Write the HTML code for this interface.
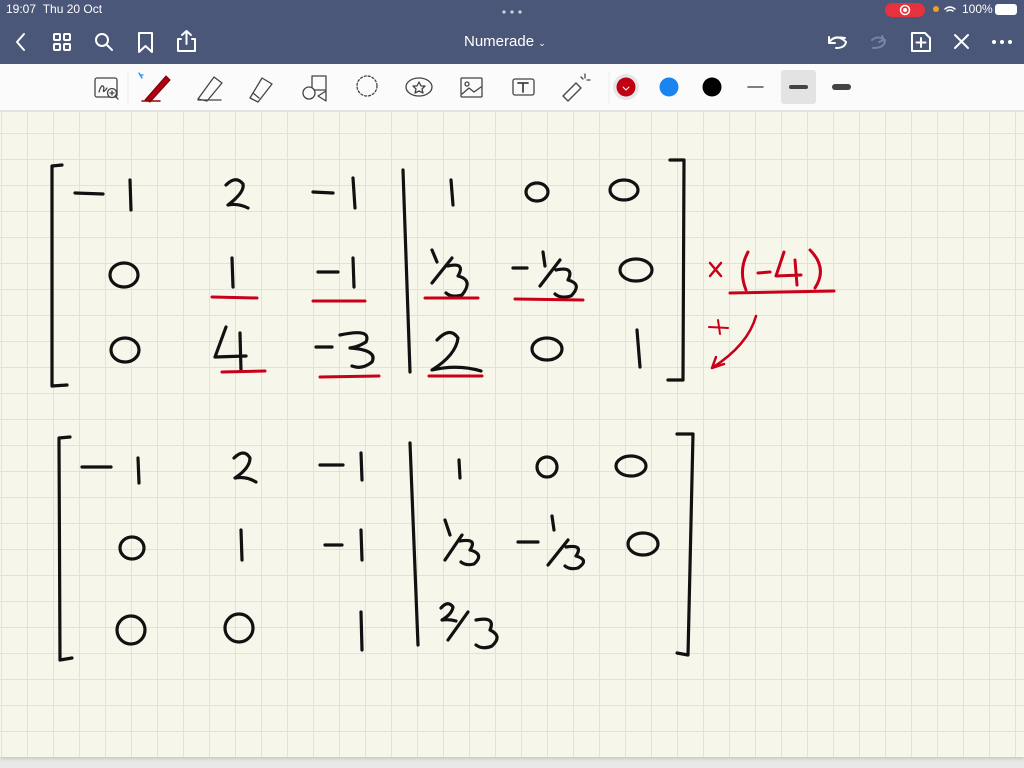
<!DOCTYPE html>
<html><head><meta charset="utf-8"><style>
html,body{margin:0;padding:0;width:1024px;height:768px;overflow:hidden;background:#e9e9e7;font-family:"Liberation Sans",sans-serif}
#nav{position:absolute;left:0;top:0;width:1024px;height:64px;background:#4b5778;color:#fff}
#tb{position:absolute;left:0;top:64px;width:1024px;height:46px;background:#fbfbfb;border-bottom:2px solid #e4e4e4}
#page{position:absolute;left:0;top:112px;width:1024px;height:645px;background-color:#f7f6eb;
background-image:linear-gradient(to right,#e4e3d3 1px,transparent 1px),linear-gradient(to bottom,#e4e3d3 1px,transparent 1px);
background-size:26px 26px;background-position:1px 21px;box-shadow:0 2px 3px #c8c8c0}
svg{position:absolute;left:0;top:0}
</style></head><body>
<div id="nav">
<div style="position:absolute;left:6px;top:2px;font-size:12px;">19:07&nbsp;&nbsp;Thu 20 Oct</div>
<div style="position:absolute;left:464px;top:33px;font-size:15px;">Numerade <span style="font-size:9px">⌄</span></div>
<div style="position:absolute;left:962px;top:2px;font-size:12px;">100%</div>
</div>
<div id="tb"></div>
<div id="page"></div>
<svg width="1024" height="768" viewBox="0 0 1024 768" fill="none" stroke-linecap="round" stroke-linejoin="round">
<!-- status -->
<g fill="#cfd4e0"><circle cx="504" cy="12" r="1.6"/><circle cx="512" cy="12" r="1.6"/><circle cx="520" cy="12" r="1.6"/></g>
<rect x="885" y="3" width="40" height="14" rx="7" fill="#e5323c"/>
<circle cx="905" cy="10" r="4.5" stroke="#fff" stroke-width="1.5"/><circle cx="905" cy="10" r="2" fill="#fff"/>
<circle cx="936" cy="9" r="3" fill="#f0a020"/>
<path d="M945 9 Q950 5 955 9 M947 11 Q950 9 953 11" stroke="#fff" stroke-width="1.5"/>
<rect x="995" y="4" width="22" height="11" rx="3" fill="#fff"/>
<!-- nav icons -->
<g stroke="#fff" stroke-width="2">
<path d="M24 34 L17 42 L24 50"/>
<rect x="54" y="34" width="6" height="6" rx="1"/><rect x="64" y="34" width="6" height="6" rx="1"/><rect x="54" y="44" width="6" height="6" rx="1"/><rect x="64" y="44" width="6" height="6" rx="1"/>
<circle cx="102" cy="40" r="6"/><path d="M107 45 L112 50"/>
<path d="M139 33 H152 V52 L145.5 46 L139 52 Z"/>
<path d="M181 39 H178 V51 H195 V39 H192 M186.5 44 V31 M182 35 L186.5 31 L191 35"/>
<path d="M845 38 Q832 36 829 43 M829 37 V43 H835 M831 40 Q838 34 846 42 Q845 48 836 48" />
<path d="M920 33 H925 L930 38 V51 H912 V33 Z M921 38 V47 M916.5 42.5 H925.5"/>
<path d="M955 35 L968 48 M968 35 L955 48"/>
</g>
<path d="M872 40 Q878 35 884 40 L882 36 M884 40 L879 42 M885 40 Q885 48 873 48" stroke="#7784a2" stroke-width="2"/>
<g fill="#fff"><circle cx="994" cy="42" r="2"/><circle cx="1002" cy="42" r="2"/><circle cx="1010" cy="42" r="2"/></g>
<!-- toolbar icons -->
<g stroke="#444" stroke-width="1.3">
<rect x="95" y="78" width="22" height="19" rx="2"/><circle cx="112" cy="93" r="4.5" fill="#fbfbfb"/><path d="M115 96 L118 99 M110 93 H114 M112 91 V95 M99 92 Q102 82 104 88 Q102 95 107 88"/>
<path d="M198 99 L214 77 L222 83 L207 101 Z M198 100 H221"/>
<path d="M250 98 L262 78 L272 84 L258 102 Z M253 93 L259 98"/>
<rect x="312" y="76" width="14" height="14"/><circle cx="309" cy="93" r="6" fill="#fbfbfb"/><path d="M326 91 V101 L318 96 Z"/>
<circle cx="367" cy="86" r="10" stroke-dasharray="2 2"/>
<ellipse cx="419" cy="87" rx="13" ry="9"/><path d="M419 82 L421 86 L425 86 L422 89 L423 93 L419 91 L415 93 L416 89 L413 86 L417 86 Z"/>
<rect x="461" y="78" width="21" height="19" rx="1"/><circle cx="467" cy="84" r="2"/><path d="M462 94 L469 88 L474 92 L481 87"/>
<rect x="513" y="79" width="21" height="16" rx="2"/><path d="M518 83 H528 M523 83 V92" stroke-width="1.8"/>
<path d="M563 96 L576 83 L581 88 L568 101 Z M585 74 V78 M590 80 H587 M581 77 L583 79"/>
</g>
<path d="M145 100 L166 76 L170 80 L150 102 Z" fill="#b00014" stroke="#700" stroke-width="1"/>
<path d="M142 101 H160" stroke="#900" stroke-width="1.5"/>
<path d="M139 73 L142 78 M140 75 L143 75" stroke="#1a8cff" stroke-width="1.3"/>
<path d="M128 72 V104 M609 72 V104" stroke="#ececec" stroke-width="1"/>
<circle cx="626" cy="87" r="13" fill="#e6e6e6"/><circle cx="626" cy="87" r="9.5" fill="#c10012"/><path d="M623 87 L626 90 L629 87" stroke="#fff" stroke-width="1"/>
<circle cx="669" cy="87" r="9.5" fill="#1a84f0"/>
<circle cx="712" cy="87" r="9.5" fill="#000"/>
<path d="M748 87 H763" stroke="#555" stroke-width="1.5"/>
<rect x="781" y="70" width="35" height="34" rx="3" fill="#e3e3e3"/>
<path d="M791 87 H806" stroke="#444" stroke-width="4"/>
<path d="M835 87 H848" stroke="#444" stroke-width="6"/>

<!-- handwriting black -->
<g stroke="#111" stroke-width="3.2">
<path d="M62 165 L52 166 L52 386 L67 385"/>
<path d="M75 193 L103 194 M130 180 L131 210"/>
<path d="M226 185 Q236 175 243 184 Q245 192 228 205 Q238 203 248 208"/>
<path d="M313 192 L333 193 M353 178 L355 208"/>
<path d="M403 170 L410 372"/>
<path d="M451 180 L453 205"/>
<ellipse cx="537" cy="192" rx="11" ry="9"/>
<ellipse cx="624" cy="190" rx="14" ry="10"/>
<path d="M670 160 L684 160 L683 380 L668 380"/>
<ellipse cx="124" cy="275" rx="14" ry="12"/>
<path d="M232 258 L233 287"/>
<path d="M318 272 L338 272 M353 258 L354 287"/>
<path d="M432 250 L437 262 M432 283 L452 258 M448 266 Q466 262 458 276 Q474 280 462 295 Q452 298 446 293"/>
<path d="M513 268 L527 268 M543 252 L545 266 M540 286 L560 260 M556 270 Q575 266 568 280 Q583 284 571 296 Q561 299 555 294"/>
<ellipse cx="636" cy="270" rx="16" ry="11"/>
<ellipse cx="125" cy="350" rx="14" ry="12"/>
<path d="M226 327 L215 357 L246 356 M240 333 L241 371"/>
<path d="M316 347 L332 347 M340 335 Q372 328 366 342 Q358 347 350 348 Q378 350 372 362 Q362 370 352 366"/>
<path d="M437 340 Q450 326 458 338 Q456 355 432 370 Q458 364 481 371"/>
<ellipse cx="547" cy="349" rx="15" ry="11"/>
<path d="M637 330 L640 367"/>

<path d="M70 437 L59 438 L60 660 L72 658"/>
<path d="M82 467 L111 467 M138 458 L139 483"/>
<path d="M234 458 Q244 448 250 458 Q250 468 235 478 Q246 476 256 482"/>
<path d="M320 465 L343 465 M361 453 L362 480"/>
<path d="M410 443 L418 645"/>
<path d="M459 460 L460 478"/>
<ellipse cx="547" cy="467" rx="10" ry="10"/>
<ellipse cx="631" cy="466" rx="15" ry="10"/>
<path d="M677 434 L693 434 L688 655 L677 653"/>
<ellipse cx="132" cy="548" rx="12" ry="11"/>
<path d="M241 530 L242 560"/>
<path d="M325 545 L342 545 M361 530 L362 560"/>
<path d="M445 520 L450 535 M445 560 L462 535 M460 541 Q478 538 470 550 Q485 554 474 564 Q466 566 461 562"/>
<path d="M518 542 L538 542 M552 516 L554 530 M548 565 L568 540 M566 547 Q584 544 576 556 Q590 560 578 568 Q570 570 565 566"/>
<ellipse cx="643" cy="544" rx="15" ry="11"/>
<ellipse cx="131" cy="630" rx="14" ry="14"/>
<ellipse cx="239" cy="628" rx="14" ry="14"/>
<path d="M361 612 L362 650"/>
<path d="M441 608 Q448 600 453 607 Q452 614 442 620 Q450 619 456 621 M448 640 L468 612 M476 620 Q496 616 490 630 Q503 636 492 646 Q483 650 476 645"/>
</g>
<!-- red -->
<g stroke="#c8001a" stroke-width="3">
<path d="M212 297 L257 298 M313 301 L365 301 M222 372 L265 371 M320 377 L379 376 M425 298 L478 298 M515 299 L583 300 M429 376 L482 376"/>
<path d="M710 263 L721 276 M721 263 L710 276" stroke-width="2.5"/>
<path d="M748 252 Q738 270 746 290 M758 273 L770 272 M784 252 L776 276 L801 275 M795 260 L797 285 M810 250 Q828 268 815 288"/>
<path d="M730 293 L834 291"/>
<path d="M709 327 L728 328 M718 320 L720 334" stroke-width="2"/>
<path d="M756 316 Q748 345 712 368 M712 368 L724 364 M712 368 L716 357" stroke-width="2.5"/>
</g>
</svg>
</body></html>
